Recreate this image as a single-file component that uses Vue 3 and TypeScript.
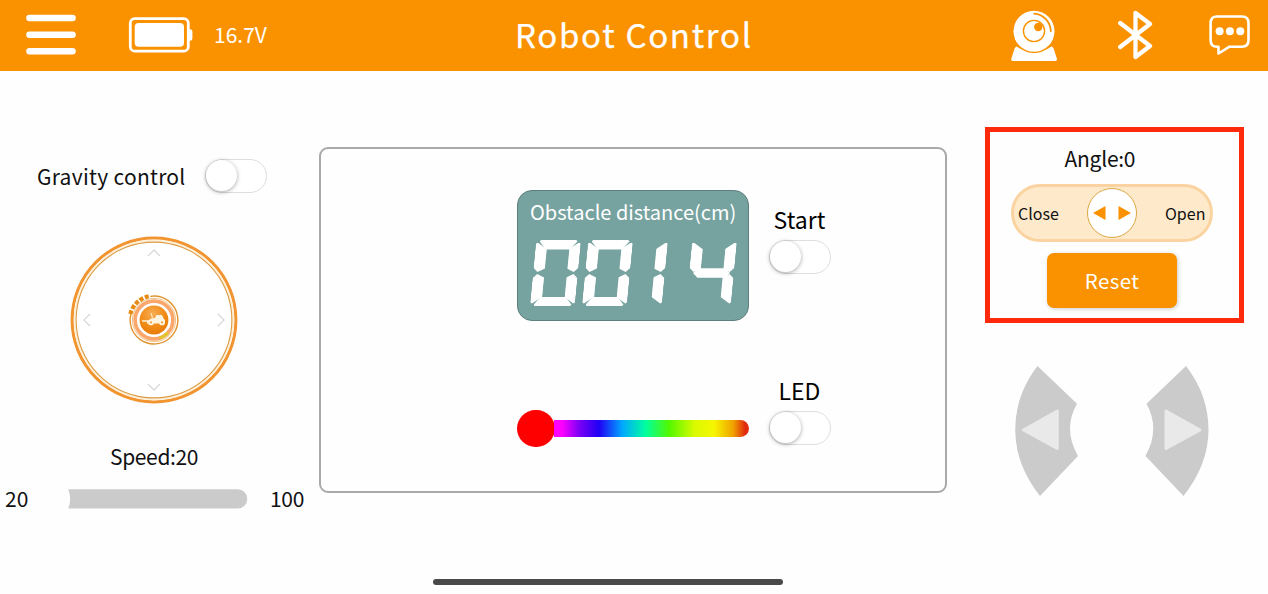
<script setup lang="ts">
import { computed, ref } from 'vue'

const voltage = ref('16.7V')
const distance = ref('0014')
const speed = ref(20)
const angle = ref(0)

const switches = ref({ gravity: false, start: false, led: false })

// Lit segments for each digit: a top, b/c right, d bottom, e/f left, g middle
const segmentMap: Record<string, string> = {
  '0': 'abcdef',
  '1': 'bc',
  '2': 'abdeg',
  '3': 'abcdg',
  '4': 'bcfg',
  '5': 'acdfg',
  '6': 'acdefg',
  '7': 'abc',
  '8': 'abcdefg',
  '9': 'abcdfg',
}
const digits = computed(() =>
  distance.value.split('').map((value) => ({ value, segments: segmentMap[value].split('') })),
)
</script>

<template>
  <div class="screen">
    <header class="bar">
      <svg class="menu" width="50" height="42" viewBox="0 0 50 42">
        <path d="M3.5 4H46.5M3.5 20.7H46.5M3.5 37.2H46.5" stroke="#fff" stroke-width="6.6" stroke-linecap="round" />
      </svg>
      <svg class="battery" width="66" height="38" viewBox="0 0 66 38">
        <rect x="2.3" y="2.6" width="58" height="32.6" rx="4.5" fill="none" stroke="#fff" stroke-width="2.8" />
        <rect x="6.7" y="7" width="49.3" height="23.7" rx="4" fill="#fff" />
        <path d="M61 13.2h1a2.4 2.4 0 0 1 2.4 2.4v6.8a2.4 2.4 0 0 1-2.4 2.4h-1z" fill="#fff" />
      </svg>
      <span class="voltage">{{ voltage }}</span>
      <h1 class="title">Robot Control</h1>
      <div class="actions">
        <svg width="48" height="54" viewBox="0 0 48 54">
          <path d="M6.5 37.5Q24 49 41.5 37.5Q43 38 43.6 39.4L47 50Q47.2 52 45.3 52H3Q1 52 1.2 50L4.6 39.4Q5.2 38 6.5 37.5Z" fill="#fff" />
          <circle cx="24" cy="22.3" r="21.8" fill="#fa9200" />
          <circle cx="24" cy="22.3" r="20.5" fill="#fff" />
          <circle cx="24" cy="22" r="10.6" fill="#fff" stroke="#fa9200" stroke-width="1.4" />
          <circle cx="28.3" cy="18" r="4.2" fill="#fa9200" />
          <path d="M24.3 4.7A18 18 0 0 1 40.8 22" fill="none" stroke="#fa9200" stroke-width="1.8" stroke-linecap="round" />
        </svg>
        <svg width="36" height="50" viewBox="0 0 36 50">
          <path d="M2.2 13L32 36L17.5 47V3L32 14L2.2 37" fill="none" stroke="#fff" stroke-width="4.3" stroke-linejoin="round" stroke-linecap="round" />
        </svg>
        <svg width="42" height="42" viewBox="0 0 42 42">
          <path d="M8 2.5H33Q39.5 2.5 39.5 9V26Q39.5 32.7 33 32.7H20.5L9.5 39.5V32.7H8Q1.6 32.7 1.6 26V9Q1.6 2.5 8 2.5Z" fill="none" stroke="#fff" stroke-width="2.6" stroke-linejoin="round" />
          <circle cx="10.6" cy="17.3" r="4" fill="#fff" />
          <circle cx="20.9" cy="17.3" r="4" fill="#fff" />
          <circle cx="31.3" cy="17.3" r="4" fill="#fff" />
        </svg>
      </div>
    </header>

    <main class="content">
      <section class="drive">
        <div class="gravity">
          <span class="gravity-label">Gravity control</span>
          <button class="toggle" :class="{ on: switches.gravity }" @click="switches.gravity = !switches.gravity"><i /></button>
        </div>

        <svg class="joystick" width="172" height="172" viewBox="-86 -86 172 172">
          <defs>
            <radialGradient id="knob" cx="45%" cy="30%" r="75%">
              <stop offset="0" stop-color="#f7ae58" />
              <stop offset=".55" stop-color="#f28c18" />
              <stop offset="1" stop-color="#e77905" />
            </radialGradient>
          </defs>
          <circle r="81.9" fill="#fff" stroke="#f29530" stroke-width="3" />
          <circle r="79.2" fill="none" stroke="#fdf0d8" stroke-width="2" />
          <circle r="77.9" fill="none" stroke="#dd9a43" stroke-width="1.1" />
          <g fill="none" stroke="#d9d9d9" stroke-width="1.4">
            <path d="M-6 -64L0 -70L6 -64" />
            <path d="M-6 64L0 70L6 64" />
            <path d="M-64 -6L-70 0L-64 6" />
            <path d="M64 -6L70 0L64 6" />
          </g>
          <circle r="23.9" fill="none" stroke="#e0942f" stroke-width="1.4" stroke-dasharray="122 28.2" transform="rotate(-99)" />
          <circle r="24.4" fill="none" stroke="#e58a12" stroke-width="4.2" stroke-dasharray="4 1.7 4 1.7 4 1.7 4 1.7 4 200" transform="rotate(-166)" />
          <circle r="21.6" fill="none" stroke="#eebc79" stroke-width=".9" />
          <circle r="18.9" fill="none" stroke="#fba66b" stroke-width="3.6" />
          <path d="M5.5 18.1A18.9 18.9 0 0 0 14.2 12.5" fill="none" stroke="#e2c52b" stroke-width="3" />
          <circle r="14.4" fill="url(#knob)" />
          <path d="M-12 .3H-5L-3 -1.5L1 -2L2.500 -5H8L9.500 -1.500L11 0V3.500H-7V1.800H-12Z" fill="#fff4df" />
          <path d="M-1.500 -2L-3 -7" stroke="#fff4df" stroke-width=".9" />
          <g fill="#f6a546" stroke="#fff4df" stroke-width="1.7">
            <circle cx="-3" cy="2.4" r="2" />
            <circle cx="8" cy="2.4" r="2" />
          </g>
        </svg>

        <div class="speed-label">Speed:{{ speed }}</div>
        <div class="speed">
          <span class="min">20</span>
          <svg width="180" height="20" viewBox="0 0 180 20">
            <path d="M.3 .3H169.700A9.600 9.600 0 0 1 169.700 19.500H.3Q4 10 .3 .3Z" fill="#cbcbcb" />
          </svg>
          <span class="max">100</span>
        </div>
      </section>

      <section class="panel">
        <div class="panel-row sensor">
          <div class="lcd">
            <div class="lcd-label">Obstacle distance(cm)</div>
            <div class="digits" role="img" :aria-label="distance">
              <div v-for="(d, i) in digits" :key="i" class="digit" :class="{ narrow: d.value === '1' }">
                <span v-for="s in d.segments" :key="s" class="seg" :class="s" />
              </div>
            </div>
          </div>
          <div class="option">
            <span>Start</span>
            <button class="toggle" :class="{ on: switches.start }" @click="switches.start = !switches.start"><i /></button>
          </div>
        </div>
        <div class="panel-row light">
          <div class="hue">
            <i class="hue-thumb" />
            <i class="hue-track" />
          </div>
          <div class="option">
            <span>LED</span>
            <button class="toggle" :class="{ on: switches.led }" @click="switches.led = !switches.led"><i /></button>
          </div>
        </div>
      </section>

      <section class="arm">
        <div class="claw">
          <div class="angle">Angle:{{ angle }}</div>
          <div class="pill">
            <span class="close">Close</span>
            <svg width="52" height="52" viewBox="-26 -26 52 52">
              <circle r="24.500" fill="#fff" stroke="#dda741" stroke-width="1" />
              <path d="M-19 0L-6.500 -7V7ZM19 0L6.500 -7V7Z" fill="#fa9200" />
            </svg>
            <span class="open">Open</span>
          </div>
          <button class="reset">Reset</button>
        </div>

        <div class="turn">
          <svg width="65" height="132" viewBox="0 0 65 132">
            <path d="M22.500 1L62 38.800Q47.500 64 63 91L25 131Q.2 99 .2 65Q.2 30 22.500 1Z" fill="#cbcbcb" />
            <path d="M8.500 65L42.300 46V83.500Z" fill="#e9e9e9" stroke="#e9e9e9" stroke-width="3" stroke-linejoin="round" />
          </svg>
          <svg width="65" height="132" viewBox="0 0 65 132">
            <path d="M41 1L1.500 38.800Q15.500 64 .5 91L38.500 131Q63.500 99 63.500 65Q63.500 30 41 1Z" fill="#cbcbcb" />
            <path d="M55 65L21 46V83.500Z" fill="#e9e9e9" stroke="#e9e9e9" stroke-width="3" stroke-linejoin="round" />
          </svg>
        </div>
      </section>
    </main>

    <div class="home" />
  </div>
</template>

<style>
body {
  margin: 0;
  background: #fefefe;
}
</style>

<style scoped>
.screen {
  width: 1268px;
  height: 594px;
  overflow: hidden;
  display: flex;
  flex-direction: column;
  background: #fefefe;
  color: #111;
  font-family: 'Noto Sans CJK SC', 'Noto Sans', sans-serif;
  font-size: 21px;
  line-height: 30px;
  white-space: nowrap;
}
svg {
  display: block;
  flex: none;
}
button {
  font: inherit;
  padding: 0;
  border: 0;
  flex: none;
}
.bar {
  height: 71px;
  flex: none;
  display: flex;
  align-items: center;
  background: #fa9200;
  color: #fff;
}
.menu {
  margin: 0 0 1px 26px;
}
.battery {
  margin: 0 0 1px 52px;
}
.voltage {
  width: 301px;
  padding: 0 0 3px 20px;
  font-size: 21px;
  letter-spacing: 0;
  box-sizing: border-box;
}
.title {
  width: 240px;
  margin: 0 0 3px 20px;
  font-size: 33px;
  line-height: 48px;
  font-weight: 400;
  letter-spacing: 1.7px;
  -webkit-text-stroke: 0.25px #fff;
}
.actions {
  margin-left: 255px;
  display: flex;
  align-items: center;
}
.actions svg:nth-child(1) {
  margin: 0 59.5px 0 0;
}
.actions svg:nth-child(2) {
  margin: 0 55.5px 2px 0;
}
.actions svg:nth-child(3) {
  margin-bottom: 2px;
}
.content {
  height: 423px;
  flex: none;
  display: grid;
  grid-template-columns: 319px 628px 1fr;
}
.drive {
  padding-top: 87px;
}
.gravity {
  height: 36px;
  display: flex;
  align-items: center;
}
.gravity-label {
  width: 168px;
  padding-left: 37px;
  letter-spacing: 0.28px;
}
.toggle {
  width: 62px;
  height: 34px;
  box-sizing: border-box;
  border: 1.5px solid #dedede;
  border-radius: 17px;
  background: #fff;
  display: flex;
}
.toggle i {
  width: 31px;
  height: 31px;
  border-radius: 50%;
  background: #fff;
  box-shadow: 0 1px 4px rgba(0, 0, 0, 0.35);
}
.toggle.on {
  justify-content: flex-end;
  background: #fa9200;
}
.joystick {
  margin: 40px 0 0 68px;
}
.speed-label {
  margin: 35px 0 0 110px;
  letter-spacing: -0.35px;
}
.speed {
  margin-top: 12px;
  display: flex;
  align-items: center;
}
.min {
  width: 63px;
  padding-left: 5px;
}
.max {
  margin-left: 22px;
  letter-spacing: -0.3px;
}
.speed span {
  margin-bottom: 1px;
}
.panel {
  margin-top: 76px;
  height: 346px;
  box-sizing: border-box;
  border: 2px solid #a9a9a9;
  border-radius: 9px;
  padding: 41px 0 0 196px;
}
.panel-row {
  display: flex;
  gap: 19.5px;
}
.sensor {
  height: 192px;
}
.lcd {
  width: 232px;
  height: 131px;
  box-sizing: border-box;
  border: 1px solid #5d7f7d;
  border-radius: 15px;
  background: #76a2a0;
  color: #fff;
}
.lcd-label {
  margin: 6px 0 0 12px;
  font-size: 20px;
}
.digits {
  margin: 13px 0 0 14.5px;
  display: flex;
  gap: 7px;
}
.digit {
  width: 45px;
  height: 66px;
  display: grid;
  transform: skewX(-5.5deg);
}
.digit.narrow {
  transform: translateX(-17px) skewX(-5.5deg);
}
.seg {
  grid-area: 1 / 1;
  background: #fff;
}
.a {
  width: 38px;
  height: 9.5px;
  justify-self: center;
  clip-path: polygon(4% 0, 96% 0, 100% 14%, 82% 100%, 18% 100%, 0 14%);
}
.d {
  width: 38px;
  height: 9.5px;
  place-self: end center;
  clip-path: polygon(18% 0, 82% 0, 100% 86%, 96% 100%, 4% 100%, 0 86%);
}
.g {
  width: 37px;
  height: 9.5px;
  place-self: center;
  clip-path: polygon(0 50%, 13% 0, 87% 0, 100% 50%, 87% 100%, 13% 100%);
}
.b,
.c,
.e,
.f {
  width: 11.5px;
  height: 29.5px;
}
.b,
.f {
  margin-top: 2.5px;
}
.c,
.e {
  margin-bottom: 2.5px;
  align-self: end;
}
.b,
.c {
  justify-self: end;
}
.b {
  clip-path: polygon(100% 4%, 100% 86%, 62% 100%, 0 88%, 0 23%, 84% 0);
}
.c {
  clip-path: polygon(62% 0, 100% 14%, 100% 96%, 84% 100%, 0 77%, 0 12%);
}
.e {
  clip-path: polygon(38% 0, 100% 12%, 100% 77%, 16% 100%, 0 96%, 0 14%);
}
.f {
  clip-path: polygon(0 4%, 16% 0, 100% 23%, 100% 88%, 38% 100%, 0 86%);
}
.option {
  display: flex;
  flex-direction: column;
  align-items: center;
  color: #000;
}
.sensor .option {
  padding-top: 14px;
}
.option span {
  font-size: 23px;
}
.option .toggle {
  margin-top: 6px;
}
.light {
  margin-top: -7px;
}
.hue {
  width: 232px;
  height: 38px;
  margin-top: 34.5px;
  display: flex;
  align-items: center;
}
.hue-thumb {
  width: 37.5px;
  height: 37.5px;
  flex: none;
  border-radius: 50%;
  background: #f00;
}
.hue-track {
  flex: 1;
  height: 17px;
  margin-left: -1px;
  border-radius: 0 9px 9px 0;
  background: linear-gradient(90deg, #f0f 2%, #f0f 4%, #7b00f5 13%, #2000f5 23%, #00a8ff 35%, #00ffa0 47%, #52f800 59%, #d9fa00 72%, #f6f600 82%, #f0a000 92%, #e02c0c 98%);
}
.arm {
  padding: 56px 0 0 38px;
}
.claw {
  width: 259px;
  height: 196px;
  box-sizing: border-box;
  border: 5px solid #ff2a0b;
  padding-top: 11px;
}
.angle {
  padding-left: 74.5px;
  letter-spacing: -0.25px;
}
.pill {
  width: 202px;
  height: 58px;
  box-sizing: border-box;
  margin: 11px 0 0 21px;
  border: 3px solid #fad3a0;
  border-radius: 29px;
  background: #feeacb;
  display: flex;
  align-items: center;
  font-size: 16px;
}
.pill span {
  margin-bottom: 1px;
}
.close {
  width: 68px;
  padding-left: 4px;
}
.open {
  margin-left: 27px;
}
.reset {
  display: block;
  width: 130px;
  height: 55px;
  margin: 11px 0 0 57px;
  padding-bottom: 2px;
  border-radius: 7px;
  background: #fa9200;
  color: #fff;
  font-size: 20.5px;
  letter-spacing: 0.4px;
  box-shadow: 1px 1px 4px rgba(0, 0, 0, 0.2);
}
.turn {
  display: flex;
  gap: 65px;
  margin: 42px 0 0 30px;
}
.home {
  width: 350px;
  height: 6px;
  margin: 84.500px 0 0 433px;
  border-radius: 3px;
  background: #494949;
}
</style>
